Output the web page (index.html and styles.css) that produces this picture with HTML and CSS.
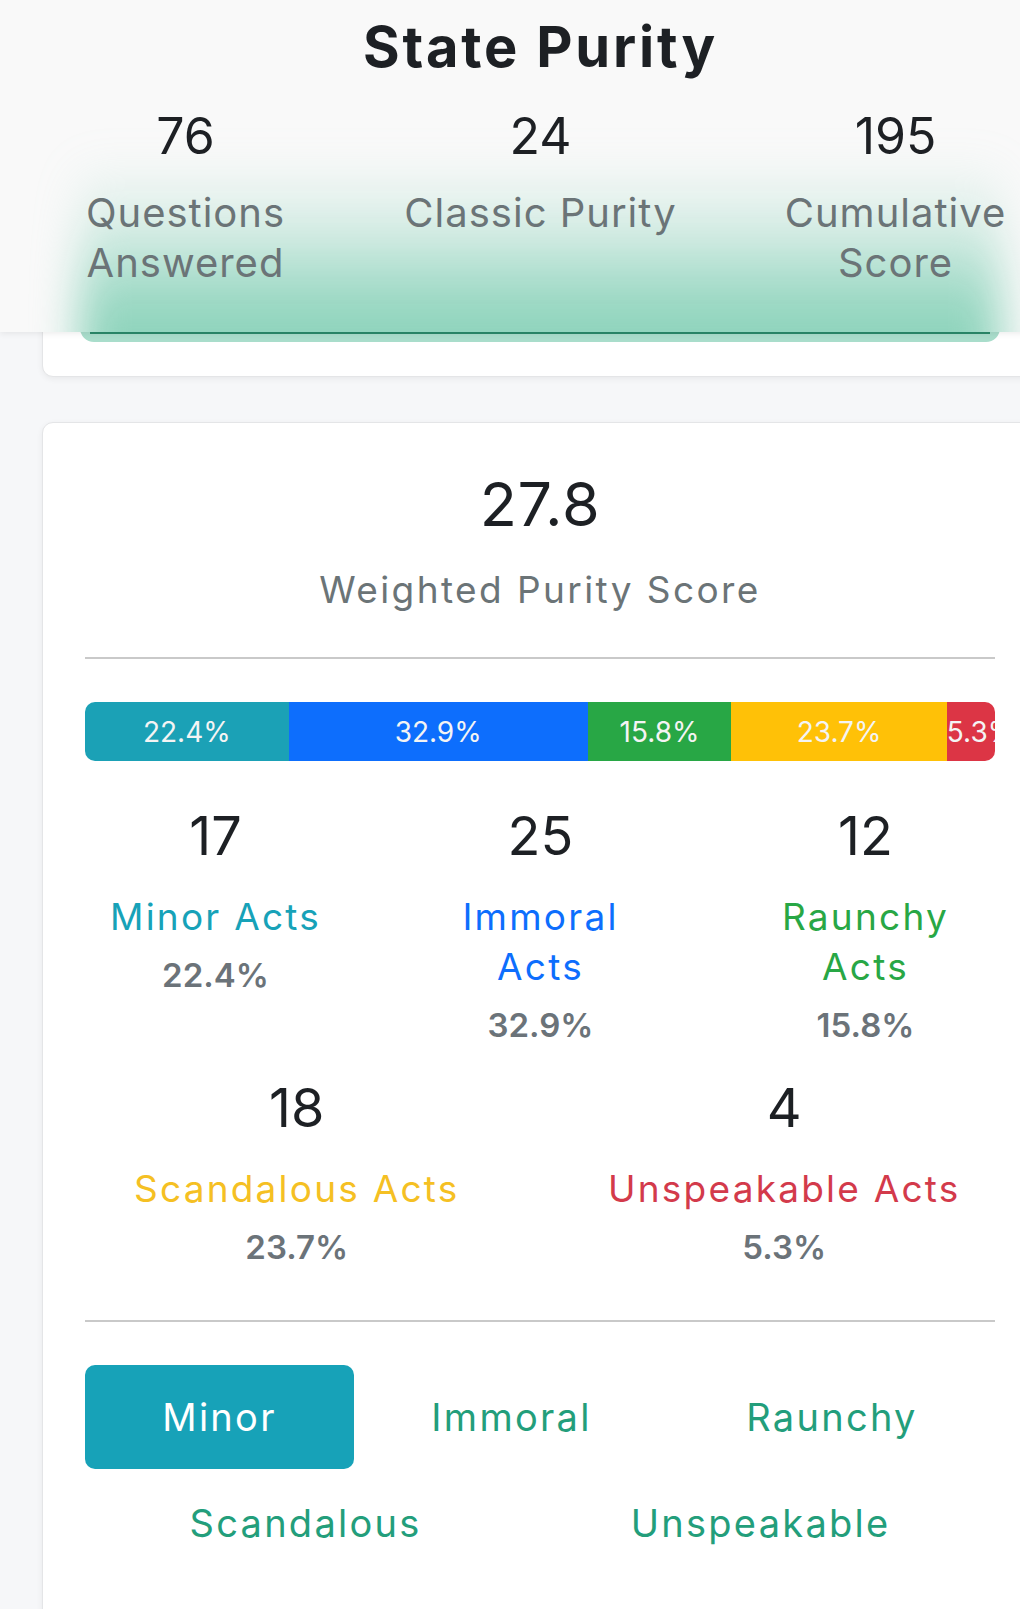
FILE: index.html
```html
<!DOCTYPE html>
<html lang="en">
<head>
<meta charset="utf-8">
<title>State Purity</title>
<link rel="stylesheet" href="styles.css">
</head>
<body>
<div class="page">
  <header class="topbar">
    <div class="glow"></div>
    <h1 class="title">State Purity</h1>
    <div class="summary">
      <div class="sum-item"><div class="sum-num">76</div><div class="sum-label">Questions Answered</div></div>
      <div class="sum-item"><div class="sum-num">24</div><div class="sum-label">Classic Purity</div></div>
      <div class="sum-item"><div class="sum-num">195</div><div class="sum-label">Cumulative Score</div></div>
    </div>
  </header>

  <main class="main">
    <section class="card card-top">
      <div class="green-bar"><div class="green-line"></div></div>
    </section>

    <section class="card card-score">
      <div class="score">27.8</div>
      <div class="score-label">Weighted Purity Score</div>
      <hr class="rule">
      <div class="progress">
        <div class="seg seg-minor" style="width:22.4%">22.4%</div>
        <div class="seg seg-immoral" style="width:32.9%">32.9%</div>
        <div class="seg seg-raunchy" style="width:15.8%">15.8%</div>
        <div class="seg seg-scandal" style="width:23.7%">23.7%</div>
        <div class="seg seg-unspeak" style="width:5.3%">5.3%</div>
      </div>

      <div class="stats stats-3">
        <div class="stat"><div class="stat-num">17</div><div class="stat-label c-minor">Minor Acts</div><div class="stat-pct">22.4%</div></div>
        <div class="stat"><div class="stat-num">25</div><div class="stat-label c-immoral">Immoral<br>Acts</div><div class="stat-pct">32.9%</div></div>
        <div class="stat"><div class="stat-num">12</div><div class="stat-label c-raunchy">Raunchy<br>Acts</div><div class="stat-pct">15.8%</div></div>
      </div>
      <div class="stats stats-2">
        <div class="stat"><div class="stat-num">18</div><div class="stat-label c-scandal">Scandalous Acts</div><div class="stat-pct">23.7%</div></div>
        <div class="stat"><div class="stat-num">4</div><div class="stat-label c-unspeak">Unspeakable Acts</div><div class="stat-pct">5.3%</div></div>
      </div>

      <hr class="rule rule-2">

      <nav class="pills">
        <div class="pill-row">
          <a class="pill active">Minor</a>
          <a class="pill">Immoral</a>
          <a class="pill">Raunchy</a>
        </div>
        <div class="pill-row">
          <a class="pill">Scandalous</a>
          <a class="pill">Unspeakable</a>
        </div>
      </nav>
    </section>
  </main>
</div>
</body>
</html>
```

FILE: styles.css
```css
* { box-sizing: border-box; }

html, body {
  margin: 0;
  padding: 0;
  overflow: hidden;
}

body {
  font-family: "Inter", "Liberation Sans", sans-serif;
  color: #212529;
  background: #f6f7f9;
}

.page {
  position: relative;
  width: 1020px;
  height: 1609px;
  overflow: hidden;
  background: #f6f7f9;
}

/* ---------- sticky header ---------- */
.topbar {
  position: absolute;
  top: 0;
  left: 0;
  width: 1080px;
  height: 332px;
  z-index: 5;
  overflow: hidden;
  background: #f9f9f9;
  box-shadow: 0 2px 6px rgba(0, 0, 0, 0.07);
  padding: 14px 7px 0 8px;
  text-align: center;
}

.glow {
  position: absolute;
  left: 80px;
  right: 80px;
  top: 160px;
  bottom: -50px;
  background: linear-gradient(to bottom,
    rgba(143, 212, 189, 0) 0%,
    rgba(143, 212, 189, 0.3) 30%,
    rgba(143, 212, 189, 0.75) 55%,
    #8dd3bb 75%,
    #8dd3bb 100%);
  filter: blur(22px);
  z-index: 0;
}

.title {
  position: relative;
  margin: 0;
  font-size: 56px;
  line-height: 66px;
  font-weight: 700;
  letter-spacing: 0.05em;
  color: #1d2024;
}

.summary {
  position: relative;
  display: grid;
  grid-template-columns: repeat(3, 355px);
  margin-top: 26px;
}

.sum-num {
  font-size: 50px;
  line-height: 60px;
  color: #1d2024;
}

.sum-label {
  margin-top: 22px;
  font-size: 40px;
  line-height: 50px;
  letter-spacing: 0.025em;
  color: #6b7477;
  padding: 0 40px;
}

/* ---------- main ---------- */
.main {
  width: 1080px;
  padding-top: 149px;
}

.card {
  margin-left: 42px;
  width: 996px;
  background: #fff;
  border: 1px solid #e4e5e7;
  border-radius: 11px;
  box-shadow: 0 2px 6px rgba(0, 0, 0, 0.06);
  padding: 0 42px;
}

.card-top {
  padding-top: 100px;
  padding-bottom: 34px;
  padding-left: 37px;
  padding-right: 37px;
}

.green-bar {
  height: 92px;
  background: #a9ddcb;
  border-radius: 0 0 14px 14px;
  padding: 0 10px;
}

.green-line {
  height: 84px;
  border-bottom: 2px solid #2b8a6b;
}

.card-score {
  margin-top: 45px;
  padding-top: 45px;
  padding-bottom: 60px;
  text-align: center;
}

.score {
  font-size: 61px;
  line-height: 72px;
  letter-spacing: 0.01em;
  color: #1d2024;
}

.score-label {
  margin-top: 25px;
  font-size: 37px;
  line-height: 50px;
  letter-spacing: 0.065em;
  color: #6b7477;
}

.rule {
  margin: 42px 0 0;
  border: 0;
  height: 2px;
  background: #c9c9c9;
}

/* ---------- progress ---------- */
.progress {
  display: flex;
  height: 59px;
  margin-top: 43px;
  border-radius: 10px;
  overflow: hidden;
}

.seg {
  display: flex;
  flex-direction: column;
  justify-content: center;
  text-align: center;
  white-space: nowrap;
  overflow: hidden;
  color: #f4f4f4;
  font-size: 28px;
}

.seg-minor   { background: #1ba1b6; }
.seg-immoral { background: #0d6efd; }
.seg-raunchy { background: #28a745; }
.seg-scandal { background: #ffc107; }
.seg-unspeak { background: #dc3545; }

/* ---------- stats ---------- */
.stats {
  display: grid;
  margin: 0 -33px 0 -32px;
}

.stats-3 {
  grid-template-columns: repeat(3, 1fr);
  margin-top: 43px;
}

.stats-2 {
  grid-template-columns: repeat(2, 1fr);
  margin-top: 29px;
}

.stat-num {
  font-size: 54px;
  line-height: 64px;
  color: #1d2024;
}

.stat-label {
  margin-top: 24px;
  font-size: 37px;
  line-height: 50px;
  letter-spacing: 0.06em;
}

.stat-pct {
  margin-top: 11px;
  font-size: 33px;
  line-height: 44px;
  font-weight: 600;
  color: #6b7379;
}

.c-minor   { color: #17a2b8; }
.c-immoral { color: #0d6efd; }
.c-raunchy { color: #28a745; }
.c-scandal { color: #f5c023; }
.c-unspeak { color: #d33a4b; }

.rule-2 {
  margin-top: 51px;
}

/* ---------- pills ---------- */
.pills {
  margin-top: 43px;
}

.pill-row {
  display: flex;
  margin-bottom: 2px;
}

.pill {
  flex: 1 1 auto;
  height: 104px;
  display: flex;
  align-items: center;
  justify-content: center;
  font-size: 38px;
  letter-spacing: 0.06em;
  color: #239e7b;
  border-radius: 10px;
  text-decoration: none;
}

.pill.active {
  background: #17a2b8;
  color: #fff;
}
```
